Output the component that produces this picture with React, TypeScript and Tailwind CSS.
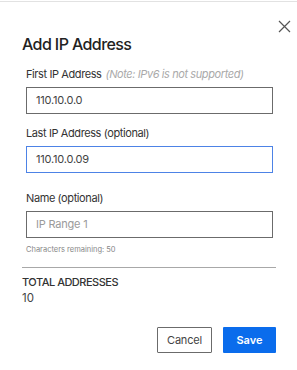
import React from 'react';

const Field = ({
  label,
  note,
  value,
  placeholder,
  focused,
}: {
  label: string;
  note?: string;
  value?: string;
  placeholder?: string;
  focused?: boolean;
}) => {
  return (
    <div>
      <div className="h-[14px] text-[11px] leading-[14px] tracking-[-0.4px] text-[#333] whitespace-nowrap">
        {label}
        {note && <span className="ml-[4px] italic text-[#aaa]">{note}</span>}
      </div>
      <div
        className={`mt-[6px] h-[27px] flex items-center pl-[9px] text-[11px] tracking-[-0.2px] border ${
          focused ? 'border-[#4d83e6]' : 'border-[#6b6b6b]'
        }`}
      >
        {value ? (
          <span className="text-[#444]">{value}</span>
        ) : (
          <span className="text-[#9a9a9a]">{placeholder}</span>
        )}
      </div>
    </div>
  );
};

export default function App() {
  return (
    <div
      className="relative w-[297px] h-[370px] bg-white overflow-hidden"
      style={{ fontFamily: 'Inter, "Liberation Sans", sans-serif' }}
    >
      <div className="mt-[1px] h-[1px] bg-[#e2e2e2]" />

      <button className="absolute left-[278px] top-[20px] w-[13px] h-[13px] text-[#555]" aria-label="Close">
        <svg viewBox="0 0 13 13" className="w-full h-full" fill="none" stroke="currentColor" strokeWidth="1.2">
          <path d="M1 1 L12 12 M12 1 L1 12" />
        </svg>
      </button>

      <div className="pl-[22px] pr-[21px]">
        <h2 className="mt-[30px] h-[24px] text-[16px] leading-[24px] font-medium text-[#222] tracking-[-0.6px]">
          Add IP Address
        </h2>

        <div className="mt-[11px] pl-[4px] pr-[3px]">
          <Field label="First IP Address" note="(Note: IPv6 is not supported)" value="110.10.0.0" />
          <div className="mt-[12px]">
            <Field label="Last IP Address (optional)" value="110.10.0.09" focused />
          </div>
          <div className="mt-[18px]">
            <Field label="Name (optional)" placeholder="IP Range 1" />
          </div>
          <div className="mt-[7px] h-[10px] text-[7.5px] leading-[10px] text-[#888]">
            Characters remaining: 50
          </div>
        </div>

        <div className="mt-[12px] h-[1px] bg-[#a8a8a8]" />

        <div className="mt-[7px] text-[11px] leading-[14px] font-medium tracking-[-0.5px] text-[#333]">
          TOTAL ADDRESSES
        </div>
        <div className="mt-[2px] text-[11.5px] leading-[14px] text-[#444]">10</div>

        <div className="mt-[22px] flex justify-end gap-[11px]">
          <button className="w-[55px] h-[26px] border border-[#6b6b6b] rounded-[1px] text-[11px] tracking-[-0.2px] text-[#444]">
            Cancel
          </button>
          <button className="w-[53px] h-[26px] bg-[#0a6cec] rounded-[1px] text-[11px] font-semibold text-white">
            Save
          </button>
        </div>
      </div>
    </div>
  );
}
